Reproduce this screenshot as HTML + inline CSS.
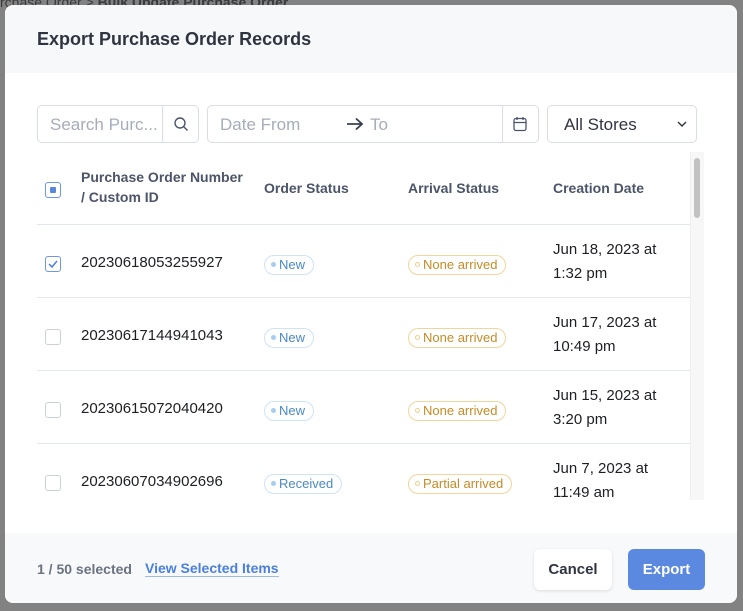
<!DOCTYPE html>
<html><head><style>
*{box-sizing:border-box;margin:0;padding:0}
body{width:743px;height:611px;background:#828282;font-family:"Liberation Sans",sans-serif;position:relative;overflow:hidden}
.bg{position:absolute;color:#3a3a3a;font-size:14px}
.modal{position:absolute;left:5px;top:5px;width:732px;height:598px;background:#fff;border-radius:8px;overflow:hidden}
.hdr{height:68px;background:#f7f8fa;padding:24px 0 0 32px;font-size:18px;font-weight:bold;color:#2f3440}
.box{position:absolute;top:100px;height:38px;border:1px solid #d8dde6;border-radius:5px;font-size:17px;color:#a6adb9}
.tbl{position:absolute;left:32px;top:147px;width:653px;height:348px;overflow:hidden}
.row{position:absolute;left:0;width:653px;height:73px;border-bottom:1px solid #e3e8f0}
.th{position:absolute;font-size:14px;font-weight:bold;color:#4c5468;line-height:20px}
.cb{position:absolute;left:8px;width:16px;height:16px;border:1px solid #c9d0da;border-radius:3px;background:#fff}
.num{position:absolute;left:44px;font-size:15px;color:#1d1f24}
.tag{position:absolute;height:20px;border-radius:10px;font-size:13px;line-height:18px;padding:0 8px 0 6px}
.tag i{display:inline-block;width:5px;height:5px;border-radius:50%;margin-right:3px;vertical-align:2px}
.blue{border:1px solid #cfe3f7;color:#4a89c8}.blue i{background:#a9cdf0}
.or{border:1px solid #f2d59a;color:#c68b25}.or i{border:1px solid #f0cf8a}
.date{position:absolute;left:516px;font-size:15px;color:#1d1f24;line-height:24px}
.ftr{position:absolute;left:0;top:528px;width:732px;height:70px;background:#f8f9fb}
</style></head><body>
<div class="bg" style="left:0;top:-6px">rchase Order &gt; <b>Bulk Update Purchase Order</b></div>
<div class="modal">
<div class="hdr">Export Purchase Order Records</div>
<div class="box" style="left:32px;width:162px"><span style="position:absolute;left:12px;top:9px">Search Purc...</span><div style="position:absolute;left:124px;top:0;width:1px;height:36px;background:#d8dde6"></div>
<svg style="position:absolute;left:135px;top:10px" width="16" height="16" viewBox="0 0 16 16" fill="none" stroke="#4c5468" stroke-width="1.4"><circle cx="7" cy="7" r="5"/><path d="M11 11l3.5 3.5"/></svg></div>
<div class="box" style="left:202px;width:332px"><span style="position:absolute;left:12px;top:9px">Date From</span>
<svg style="position:absolute;left:138px;top:11px" width="18" height="14" viewBox="0 0 18 14" fill="none" stroke="#3a4050" stroke-width="1.8"><path d="M1 7h15M10 1.5L16 7l-6 5.5"/></svg>
<span style="position:absolute;left:162px;top:9px">To</span><div style="position:absolute;left:294px;top:0;width:1px;height:36px;background:#d8dde6"></div>
<svg style="position:absolute;left:305px;top:10px" width="14" height="16" viewBox="0 0 14 16" fill="none" stroke="#4c5468" stroke-width="1.3"><rect x="1" y="2.5" width="12" height="12" rx="2"/><path d="M1 6.5h12M4 1v3M10 1v3"/></svg></div>
<div class="box" style="left:542px;width:150px;color:#2f3440"><span style="position:absolute;left:16px;top:9px">All Stores</span>
<svg style="position:absolute;left:128px;top:14px" width="12" height="8" viewBox="0 0 12 8" fill="none" stroke="#2f3440" stroke-width="1.4"><path d="M2 2l4 4 4-4"/></svg></div>
<div class="tbl">
<div class="row" style="top:0;height:73px">
<div class="cb" style="top:30px;border-color:#6f97e6"><div style="width:6px;height:6px;background:#5a86de;margin:4px;border-radius:1px"></div></div>
<div class="th" style="left:44px;top:15px">Purchase Order Number<br>/ Custom ID</div>
<div class="th" style="left:227px;top:26px">Order Status</div>
<div class="th" style="left:371px;top:26px">Arrival Status</div>
<div class="th" style="left:516px;top:26px">Creation Date</div>
</div>
<div class="row" style="top:73px"><div class="cb" style="top:31px;border-color:#6f97e6"><svg width="14" height="14" viewBox="0 0 14 14" fill="none" stroke="#4a7fe0" stroke-width="1.5"><path d="M3 7l3 3 5-6"/></svg></div><div class="num" style="top:29px">20230618053255927</div><span class="tag blue" style="left:227px;top:30px"><i></i>New</span><span class="tag or" style="left:371px;top:30px"><i></i>None arrived</span><div class="date" style="top:13px">Jun 18, 2023 at<br>1:32 pm</div></div>
<div class="row" style="top:146px"><div class="cb" style="top:31px"></div><div class="num" style="top:29px">20230617144941043</div><span class="tag blue" style="left:227px;top:30px"><i></i>New</span><span class="tag or" style="left:371px;top:30px"><i></i>None arrived</span><div class="date" style="top:13px">Jun 17, 2023 at<br>10:49 pm</div></div>
<div class="row" style="top:219px"><div class="cb" style="top:31px"></div><div class="num" style="top:29px">20230615072040420</div><span class="tag blue" style="left:227px;top:30px"><i></i>New</span><span class="tag or" style="left:371px;top:30px"><i></i>None arrived</span><div class="date" style="top:13px">Jun 15, 2023 at<br>3:20 pm</div></div>
<div class="row" style="top:292px;border:none"><div class="cb" style="top:31px"></div><div class="num" style="top:29px">20230607034902696</div><span class="tag blue" style="left:227px;top:30px"><i></i>Received</span><span class="tag or" style="left:371px;top:30px"><i></i>Partial arrived</span><div class="date" style="top:13px">Jun 7, 2023 at<br>11:49 am</div></div>
</div>
<div style="position:absolute;left:685px;top:147px;width:14px;height:348px;background:#f7f7f7;border-left:1px solid #eee"><div style="position:absolute;left:3px;top:6px;width:6px;height:60px;border-radius:3px;background:#c2c2c2"></div></div>
<div class="ftr">
<span style="position:absolute;left:32px;top:28px;font-size:14px;color:#6b7280;font-weight:bold">1 / 50 selected</span>
<span style="position:absolute;left:140px;top:27px;font-size:14px;color:#4a7fe0;font-weight:bold;border-bottom:1px solid #9cb8ef">View Selected Items</span>
<div style="position:absolute;left:529px;top:16px;width:78px;height:41px;background:#fff;border-radius:6px;box-shadow:0 1px 3px rgba(0,0,0,.12);font-size:15px;font-weight:bold;color:#2f3440;text-align:center;line-height:41px">Cancel</div>
<div style="position:absolute;left:623px;top:16px;width:77px;height:41px;background:#5b89e0;border-radius:6px;font-size:15px;font-weight:bold;color:#fff;text-align:center;line-height:41px">Export</div>
</div>
</div>
</body></html>
